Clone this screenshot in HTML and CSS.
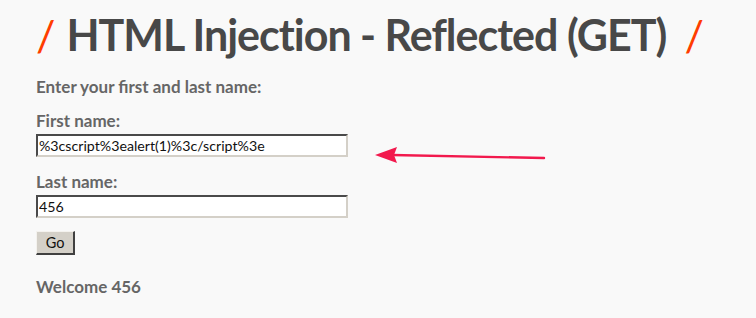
FILE: index.html
```html
<!DOCTYPE html>
<html>
<head>
<meta charset="utf-8">
<link rel="stylesheet" href="styles.css">
</head>
<body>
<div class="page">
  <h1 class="title"><span class="slash">/</span><span class="title-text">HTML Injection - Reflected (GET)</span><span class="slash">/</span></h1>
  <form class="form">
    <p class="intro">Enter your first and last name:</p>
    <label class="label" for="firstname">First name:</label>
    <input class="field" id="firstname" type="text" value="%3cscript%3ealert(1)%3c/script%3e">
    <label class="label" for="lastname">Last name:</label>
    <input class="field" id="lastname" type="text" value="456">
    <button class="go" type="button">Go</button>
  </form>
  <p class="welcome">Welcome 456</p>
</div>
<svg class="arrow" width="756" height="318" viewBox="0 0 756 318">
  <line x1="544" y1="158" x2="392" y2="155" stroke="#f2194d" stroke-width="2.4" stroke-linecap="round"/>
  <polygon points="375,155 397,147 394,155 397,163" fill="#f2194d"/>
</svg>
</body>
</html>
```
FILE: styles.css
```css
html, body {
  margin: 0;
  padding: 0;
}
body {
  background: #f9f9f9;
  font-family: "Lato", "Liberation Sans", sans-serif;
  color: #666;
  width: 756px;
  height: 318px;
  overflow: hidden;
  position: relative;
}
.page {
  padding: 9px 0 0 36px;
}
.title {
  margin: 0;
  display: flex;
  align-items: baseline;
  white-space: nowrap;
  font-size: 43px;
  line-height: 52px;
  font-weight: 700;
  color: #484848;
  letter-spacing: -1px;
}
.slash {
  color: #ff3d00;
  font-weight: 400;
}
.title-text {
  margin: 0 18px 0 12px;
}
.form {
  display: flex;
  flex-direction: column;
  align-items: flex-start;
  margin-top: 16px;
}
.intro {
  margin: 0 0 14px 0;
  font-size: 17px;
  font-weight: 700;
  line-height: 20px;
}
.label {
  font-size: 17px;
  font-weight: 700;
  line-height: 20px;
  margin-bottom: 3px;
}
.field {
  box-sizing: border-box;
  width: 312px;
  height: 23px;
  margin: 0 0 15px 0;
  padding: 1px 2px 1px 1px;
  border-style: solid;
  border-width: 2px;
  border-color: #4a4a4a #d4d0c8 #d4d0c8 #4a4a4a;
  background: #fff;
  font-family: "Lato", "Liberation Sans", sans-serif;
  font-size: 14.2px;
  color: #111;
}
.go {
  box-sizing: border-box;
  width: 39px;
  height: 24px;
  margin-top: -2px;
  padding: 0;
  border-style: solid;
  border-width: 1px 2px 2px 1px;
  border-color: #f4f2ee #404040 #404040 #f4f2ee;
  background: #d4d0c8;
  font-family: "Lato", "Liberation Sans", sans-serif;
  font-size: 14.5px;
  color: #111;
}
.welcome {
  margin: 22px 0 0 0;
  font-size: 17px;
  font-weight: 700;
  line-height: 20px;
}
.arrow {
  position: absolute;
  left: 0;
  top: 0;
  pointer-events: none;
}
```
